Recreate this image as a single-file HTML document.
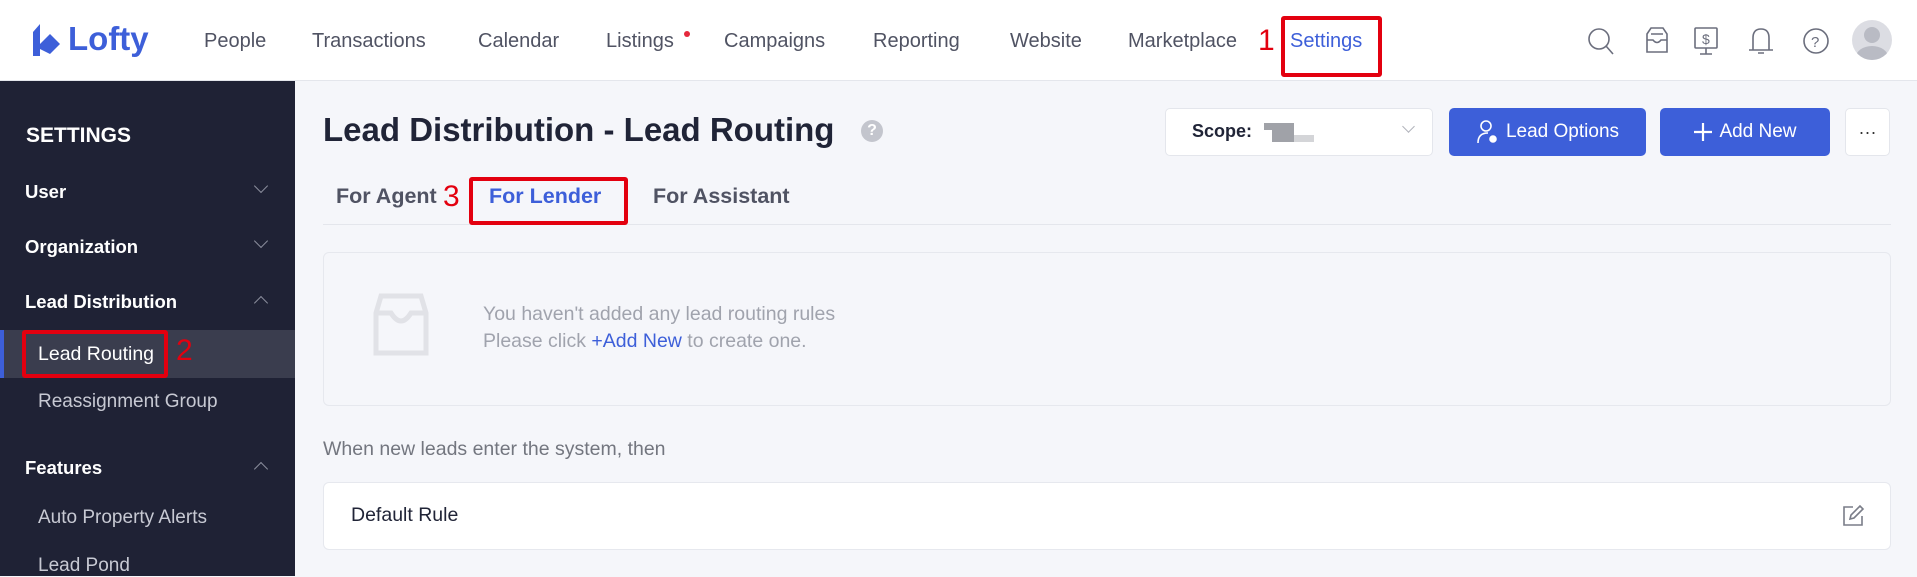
<!DOCTYPE html>
<html><head><meta charset="utf-8"><style>
*{box-sizing:border-box;margin:0;padding:0}
body{width:1917px;height:576px;overflow:hidden;font-family:"Liberation Sans",sans-serif;background:#f5f6fa;position:relative;color:#202437}
.a{position:absolute;white-space:nowrap}
.hdr{position:absolute;left:0;top:0;width:1917px;height:81px;background:#fff;border-bottom:1px solid #e4e6ec}
.nav{font-size:20px;color:#505363;top:30px}
.side{position:absolute;left:0;top:81px;width:295px;height:495px;background:#1f2235}
.si{color:#fff;font-size:18.5px;font-weight:bold}
.sub{color:#c7c9d3;font-size:19px}
.chev{position:absolute;left:256px;width:10px;height:10px;border-right:1.5px solid #8a8d9c;border-bottom:1.5px solid #8a8d9c;transform:rotate(45deg)}
.chev.up{transform:rotate(-135deg)}
.red{position:absolute;border:4px solid #e3000f;border-radius:3px}
.rn{position:absolute;color:#e3000f;font-size:30px}
.btn{position:absolute;top:108px;height:48px;background:#3d5fd9;border-radius:5px;color:#fff;font-size:19px;display:flex;align-items:center;justify-content:center;gap:6px}
.box{position:absolute;left:323px;width:1568px;border:1px solid #e6e8ee;border-radius:6px}
</style></head><body>
<div class="hdr"></div>
<svg class="a" style="left:31px;top:22px" width="30" height="35" viewBox="0 0 30 35"><path d="M2 10 L9 2 V22 L19 12 L29 22 L19 32 L9 27 V34 H2 Z" fill="#3d5fd9"/></svg>
<div class="a" style="left:68px;top:20px;font-size:33px;font-weight:bold;color:#3d5fd9">Lofty</div>
<div class="a nav" style="left:204px">People</div>
<div class="a nav" style="left:312px">Transactions</div>
<div class="a nav" style="left:478px">Calendar</div>
<div class="a nav" style="left:606px">Listings</div>
<div class="a" style="left:684px;top:31px;width:6px;height:6px;border-radius:50%;background:#e5293c"></div>
<div class="a nav" style="left:724px">Campaigns</div>
<div class="a nav" style="left:873px">Reporting</div>
<div class="a nav" style="left:1010px">Website</div>
<div class="a nav" style="left:1128px">Marketplace</div>
<div class="rn" style="left:1258px;top:24px">1</div>
<div class="a nav" style="left:1290px;color:#3d5fd9">Settings</div>
<div class="red" style="left:1281px;top:16px;width:101px;height:61px"></div>
<svg class="a" style="left:1583px;top:24px" width="260" height="34" viewBox="0 0 260 34" fill="none" stroke="#6b6e7d" stroke-width="1.6">
<circle cx="16" cy="15" r="10"/><path d="M23 22 L30 30"/>
<path d="M64 10 L68 4 H80 L84 10 V28 H64 Z M64 16 H70 Q74 21 78 16 H84 M68 10 H80"/>
<rect x="112" y="4" width="22" height="20" rx="1"/><path d="M123 24 V30 M117 30 H129"/><text x="119" y="20" font-size="14" fill="#6b6e7d" stroke="none" font-family="Liberation Sans">$</text>
<path d="M170 26 V14 Q170 5 178 5 Q186 5 186 14 V26 Z M166 26 H190 M175 29 H181"/>
<circle cx="233" cy="17" r="12"/><text x="228" y="23" font-size="15" fill="#6b6e7d" stroke="none" font-family="Liberation Sans">?</text>
</svg>
<div class="a" style="left:1852px;top:20px;width:40px;height:40px;border-radius:50%;background:#dcdde3;overflow:hidden"><div class="a" style="left:12px;top:7px;width:16px;height:16px;border-radius:50%;background:#b9bbc4"></div><div class="a" style="left:4px;top:26px;width:32px;height:22px;border-radius:50%;background:#b9bbc4"></div></div>

<div class="side"></div>
<div class="a" style="left:26px;top:124px;color:#fff;font-size:21px;font-weight:bold">SETTINGS</div>
<div class="a si" style="left:25px;top:181px">User</div><div class="chev" style="top:181px"></div>
<div class="a si" style="left:25px;top:236px">Organization</div><div class="chev" style="top:236px"></div>
<div class="a si" style="left:25px;top:291px">Lead Distribution</div><div class="chev up" style="top:298px"></div>
<div class="a" style="left:0;top:330px;width:295px;height:48px;background:#3a3d4e;border-left:4px solid #3d5fd9"></div>
<div class="a" style="left:38px;top:343px;color:#fff;font-size:19.5px">Lead Routing</div>
<div class="red" style="left:22px;top:330px;width:146px;height:48px"></div>
<div class="rn" style="left:176px;top:334px">2</div>
<div class="a sub" style="left:38px;top:391px">Reassignment Group</div>
<div class="a si" style="left:25px;top:457px">Features</div><div class="chev up" style="top:464px"></div>
<div class="a sub" style="left:38px;top:507px">Auto Property Alerts</div>
<div class="a sub" style="left:38px;top:555px">Lead Pond</div>

<div class="a" style="left:323px;top:111px;font-size:33px;font-weight:bold">Lead Distribution - Lead Routing</div>
<div class="a" style="left:861px;top:120px;width:22px;height:22px;border-radius:50%;background:#c3c5cd;color:#fff;font-size:16px;font-weight:bold;text-align:center;line-height:22px">?</div>
<div class="a" style="left:1165px;top:108px;width:268px;height:48px;background:#fff;border:1px solid #e4e6ec;border-radius:5px"></div>
<div class="a" style="left:1192px;top:121px;font-size:18px;font-weight:bold">Scope:</div>
<div class="a" style="left:1264px;top:123px;width:12px;height:7px;background:#a0a2a8"></div>
<div class="a" style="left:1272px;top:123px;width:22px;height:19px;background:#a0a2a8"></div>
<div class="a" style="left:1294px;top:135px;width:20px;height:7px;background:#d4d5d8"></div>
<div class="a" style="left:1404px;top:122px;width:9px;height:9px;border-right:1px solid #b0b2ba;border-bottom:1px solid #b0b2ba;transform:rotate(45deg)"></div>
<div class="btn" style="left:1449px;width:197px"><svg width="24" height="26" viewBox="0 0 24 26" fill="none" stroke="#fff" stroke-width="1.6"><circle cx="10" cy="7" r="5"/><path d="M2 24 Q2 14 12 14"/><circle cx="17" cy="20" r="3" fill="#fff"/></svg>Lead Options</div>
<div class="btn" style="left:1660px;width:170px"><svg width="20" height="20" viewBox="0 0 20 20" stroke="#fff" stroke-width="2.2"><path d="M10 1 V19 M1 10 H19"/></svg>Add New</div>
<div class="a" style="left:1845px;top:108px;width:45px;height:48px;background:#fff;border:1px solid #e4e6ec;border-radius:5px;text-align:center;font-size:18px;line-height:46px;color:#333">···</div>

<div class="a" style="left:323px;top:224px;width:1568px;height:1px;background:#e4e6ec"></div>
<div class="a" style="left:336px;top:184px;font-size:21.5px;font-weight:bold;color:#505363">For Agent</div>
<div class="rn" style="left:443px;top:180px">3</div>
<div class="a" style="left:489px;top:184px;font-size:21.5px;font-weight:bold;color:#3d5fd9">For Lender</div>
<div class="red" style="left:469px;top:177px;width:159px;height:48px"></div>
<div class="a" style="left:653px;top:184px;font-size:21.5px;font-weight:bold;color:#505363">For Assistant</div>

<div class="box" style="top:252px;height:154px"></div>
<svg class="a" style="left:373px;top:293px" width="56" height="64" viewBox="0 0 56 64" fill="none" stroke="#e1e2e7" stroke-width="5"><path d="M8 3 H48 L53 20 V60 H3 V20 Z M3 20 H18 Q28 36 38 20 H53"/></svg>
<div class="a" style="left:483px;top:303px;font-size:19.5px;color:#a0a3ad">You haven't added any lead routing rules</div>
<div class="a" style="left:483px;top:330px;font-size:19.5px;color:#a0a3ad">Please click <span style="color:#3d5fd9">+Add New</span> to create one.</div>

<div class="a" style="left:323px;top:438px;font-size:19.5px;color:#73767f">When new leads enter the system, then</div>
<div class="box" style="top:482px;height:68px;background:#fff"></div>
<div class="a" style="left:351px;top:504px;font-size:19.5px;color:#202437">Default Rule</div>
<svg class="a" style="left:1841px;top:504px" width="24" height="24" viewBox="0 0 24 24" fill="none" stroke="#7a7d88" stroke-width="1.6"><path d="M12 3 H3 V21 H21 V12 M9 15 L10 11 L19 2 L22 5 L13 14 Z"/></svg>
</body></html>
